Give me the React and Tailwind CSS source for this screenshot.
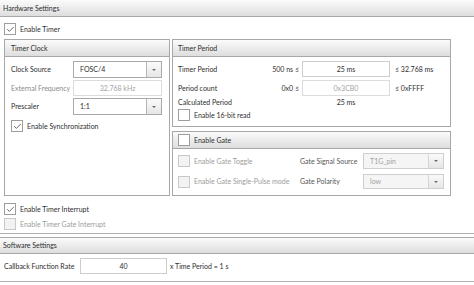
import { Check } from "lucide-react";

const FONT = { fontFamily: "Lato, 'Open Sans', sans-serif" };

function Box({ checked, disabled }) {
  return (
    <span
      className={`flex h-[12px] w-[12px] shrink-0 items-center justify-center border ${
        disabled ? "border-[#c9c9c9] bg-[#f3f3f3]" : "border-[#9e9e9e] bg-white"
      }`}
    >
      {checked && <Check size={9} strokeWidth={2} className="text-[#3c3c3c]" />}
    </span>
  );
}

function CheckRow({ label, checked, disabled, className = "" }) {
  return (
    <div className={`flex items-center gap-[4px] ${className}`}>
      <Box checked={checked} disabled={disabled} />
      <span className={disabled ? "text-[#9b9b9b]" : "text-[#2e2e2e]"}>{label}</span>
    </div>
  );
}

function Select({ value, disabled, className = "" }) {
  return (
    <div
      className={`flex border ${
        disabled ? "border-[#cfcfcf] bg-[#f5f5f5] text-[#a3a3a3]" : "border-[#a9a9a9] bg-white text-[#2e2e2e]"
      } ${className}`}
    >
      <div className="flex flex-1 items-center pl-[6px]">{value}</div>
      <div
        className={`flex w-[15px] items-center justify-center border-l bg-gradient-to-b from-[#fafafa] to-[#e6e6e6] ${
          disabled ? "border-[#d5d5d5]" : "border-[#b5b5b5]"
        }`}
      >
        <span className="h-0 w-0 border-x-[2px] border-t-[2px] border-x-transparent border-t-[#6a6a6a]" />
      </div>
    </div>
  );
}

function Field({ value, muted, className = "" }) {
  return (
    <div
      className={`flex items-center justify-center border border-[#cdcdcd] bg-white ${
        muted ? "text-[#a3a3a3]" : "text-[#2e2e2e]"
      } ${className}`}
    >
      {value}
    </div>
  );
}

function Header({ children, className = "" }) {
  return (
    <div
      className={`flex h-[17px] shrink-0 items-center border-b border-[#a8a8a8] bg-gradient-to-b from-[#fbfbfb] to-[#dedede] ${className}`}
    >
      {children}
    </div>
  );
}

export default function App() {
  return (
    <div
      className="h-[285px] w-[474px] overflow-hidden whitespace-nowrap bg-white text-[7px] leading-[9px] text-[#2e2e2e]"
      style={FONT}
    >
      <Header className="h-[16px] px-[3px]">Hardware Settings</Header>

      <CheckRow label="Enable Timer" checked className="mt-[6px] pl-[4px]" />

      <div className="mt-[4px] flex gap-[2px] px-[4px]">
        <div className="flex h-[157px] w-[166px] flex-col border border-[#a8a8a8]">
          <Header className="h-[17px] px-[6px]">Timer Clock</Header>
          <div className="flex flex-col gap-[2px] pl-[6px] pr-[7px] pt-[4px]">
            <div className="flex items-center">
              <span className="w-[62px]">Clock Source</span>
              <Select value="FOSC/4" className="h-[17px] flex-1" />
            </div>
            <div className="flex items-center">
              <span className="w-[62px] text-[#8a8a8a]">External Frequency</span>
              <Field value="32.768 kHz" muted className="h-[16px] flex-1 border-[#dcdcdc]" />
            </div>
            <div className="flex items-center">
              <span className="w-[62px]">Prescaler</span>
              <Select value="1:1" className="h-[17px] flex-1" />
            </div>
            <CheckRow label="Enable Synchronization" checked className="mt-[3px]" />
          </div>
        </div>

        <div className="flex w-[279px] flex-col gap-[4px]">
          <div className="flex h-[88px] flex-col border border-[#a8a8a8]">
            <Header className="px-[5px]">Timer Period</Header>
            <div className="flex flex-col gap-[3px] px-[5px] pt-[4px]">
              <div className="flex items-center">
                <span className="w-[88px]">Timer Period</span>
                <span className="w-[33px] text-right">500 ns ≤</span>
                <Field value="25 ms" className="ml-[3px] h-[16px] w-[88px]" />
                <span className="ml-[5px]">≤ 32.768 ms</span>
              </div>
              <div className="flex items-center">
                <span className="w-[88px]">Period count</span>
                <span className="w-[33px] text-right">0x0 ≤</span>
                <Field value="0x3CB0" muted className="ml-[3px] h-[16px] w-[88px] border-[#dcdcdc]" />
                <span className="ml-[5px]">≤ 0xFFFF</span>
              </div>
              <div className="-mt-[1px] flex items-center">
                <span className="w-[124px]">Calculated Period</span>
                <span className="w-[88px] text-center">25 ms</span>
              </div>
              <CheckRow label="Enable 16-bit read" className="-mt-[1px]" />
            </div>
          </div>

          <div className="flex flex-1 flex-col border border-[#a8a8a8]">
            <Header className="px-[5px]">
              <CheckRow label="Enable Gate" />
            </Header>
            <div className="flex flex-col gap-[5px] px-[5px] pt-[4px]">
              <div className="flex items-center">
                <CheckRow label="Enable Gate Toggle" disabled className="w-[122px]" />
                <span className="w-[63px] text-[#555]">Gate Signal Source</span>
                <Select value="T1G_pin" disabled className="h-[16px] w-[81px]" />
              </div>
              <div className="flex items-center">
                <CheckRow label="Enable Gate Single-Pulse mode" disabled className="w-[122px]" />
                <span className="w-[63px] text-[#555]">Gate Polarity</span>
                <Select value="low" disabled className="h-[15px] w-[81px]" />
              </div>
            </div>
          </div>
        </div>
      </div>

      <div className="flex flex-col gap-[3px] border-b border-[#b0b0b0] pb-[3px] pl-[4px] pt-[7px]">
        <CheckRow label="Enable Timer Interrupt" checked />
        <CheckRow label="Enable Timer Gate Interrupt" disabled />
      </div>

      <Header className="mt-[3px] border-t px-[3px]">Software Settings</Header>
      <div className="flex items-center border-b border-[#b0b0b0] pb-[7px] pl-[4px] pt-[4px]">
        <span className="w-[76px]">Callback Function Rate</span>
        <Field value="40" className="h-[16px] w-[87px]" />
        <span className="ml-[3px]">x Time Period = 1 s</span>
      </div>
    </div>
  );
}
